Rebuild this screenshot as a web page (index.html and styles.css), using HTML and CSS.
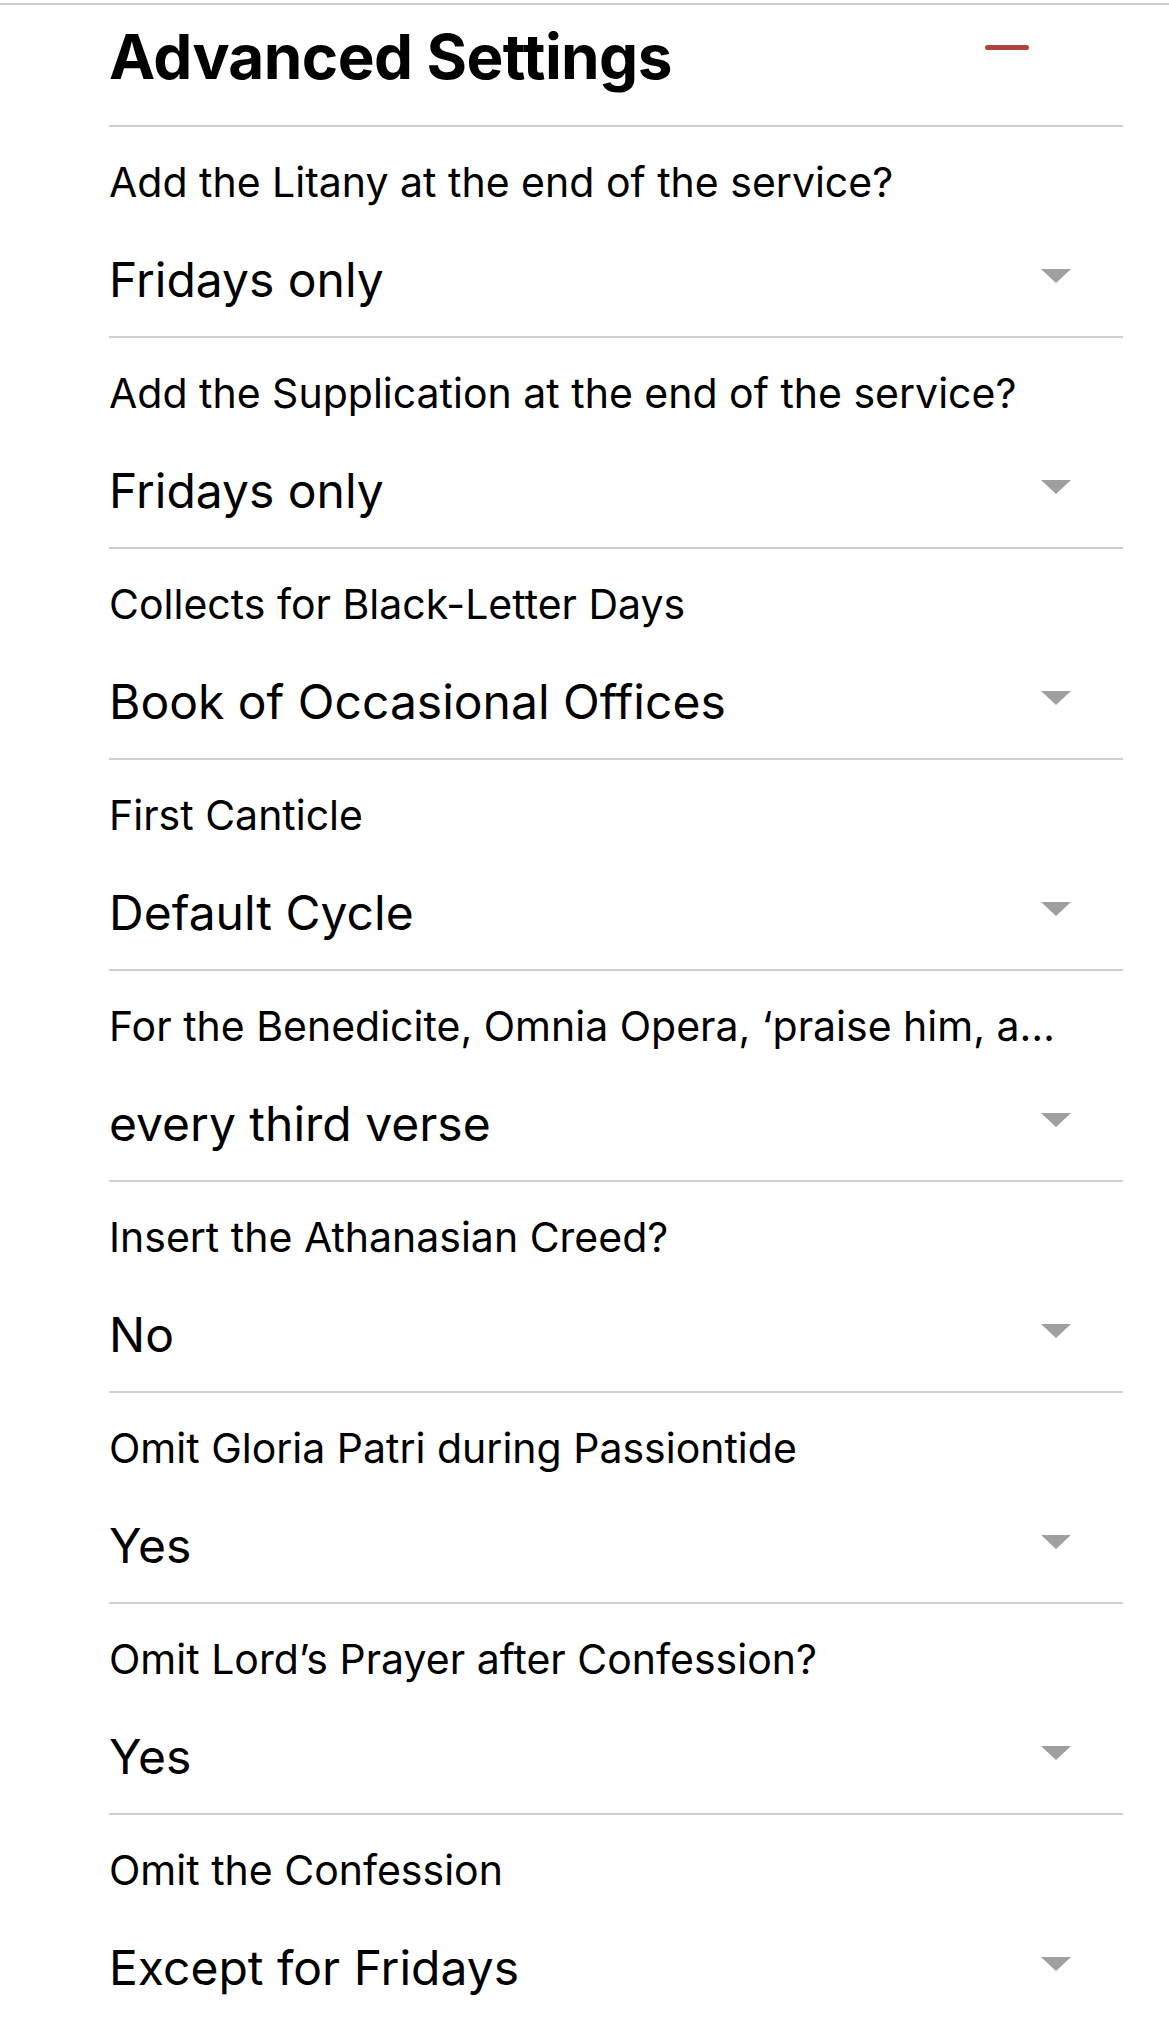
FILE: index.html
```html
<!DOCTYPE html>
<html>
<head>
<title>Advanced Settings</title>
<link rel="stylesheet" href="styles.css">
</head>
<body>

<div class="ajustes">
  <div class="ajustes__cabecera">
    <h1 class="ajustes__titulo">Advanced Settings</h1>
    <button class="ajustes__cerrar" aria-label="Collapse"></button>
  </div>

  <div class="opcion">
    <div class="opcion__pregunta">Add the Litany at the end of the service?</div>
    <div class="opcion__valor"><span>Fridays only</span><i class="flecha"></i></div>
  </div>
  <div class="opcion">
    <div class="opcion__pregunta">Add the Supplication at the end of the service?</div>
    <div class="opcion__valor"><span>Fridays only</span><i class="flecha"></i></div>
  </div>
  <div class="opcion">
    <div class="opcion__pregunta">Collects for Black-Letter Days</div>
    <div class="opcion__valor"><span>Book of Occasional Offices</span><i class="flecha"></i></div>
  </div>
  <div class="opcion">
    <div class="opcion__pregunta">First Canticle</div>
    <div class="opcion__valor"><span>Default Cycle</span><i class="flecha"></i></div>
  </div>
  <div class="opcion">
    <div class="opcion__pregunta">For the Benedicite, Omnia Opera, ‘praise him, a…</div>
    <div class="opcion__valor"><span>every third verse</span><i class="flecha"></i></div>
  </div>
  <div class="opcion">
    <div class="opcion__pregunta">Insert the Athanasian Creed?</div>
    <div class="opcion__valor"><span>No</span><i class="flecha"></i></div>
  </div>
  <div class="opcion">
    <div class="opcion__pregunta">Omit Gloria Patri during Passiontide</div>
    <div class="opcion__valor"><span>Yes</span><i class="flecha"></i></div>
  </div>
  <div class="opcion">
    <div class="opcion__pregunta">Omit Lord’s Prayer after Confession?</div>
    <div class="opcion__valor"><span>Yes</span><i class="flecha"></i></div>
  </div>
  <div class="opcion">
    <div class="opcion__pregunta">Omit the Confession</div>
    <div class="opcion__valor"><span>Except for Fridays</span><i class="flecha"></i></div>
  </div>
</div>

</body>
</html>
```

FILE: styles.css
```css
html {
  font-family: Inter, "Noto Sans", sans-serif;
}

body {
  margin: 0;
  background: #fff;
  color: #000;
  overflow: hidden;
}

.ajustes {
  border-top: 2px solid #d0d0d0;
  margin-top: 3px;
  padding: 0 46px 0 109px;
}

.ajustes__cabecera {
  display: flex;
  justify-content: space-between;
  align-items: flex-start;
  height: 120px;
  box-sizing: border-box;
}

.ajustes__titulo {
  margin: 21px 0 0 0;
  font-size: 62px;
  line-height: 1;
  font-weight: 700;
  letter-spacing: -0.6px;
}

.ajustes__cerrar {
  margin: 40px 94px 0 0;
  width: 44px;
  height: 5px;
  border: none;
  border-radius: 3px;
  background: #b0443a;
  padding: 0;
}

.opcion {
  border-top: 2px solid #d0d0d0;
  height: 211px;
  box-sizing: border-box;
  padding-top: 31px;
}

.opcion__pregunta {
  font-size: 41px;
  line-height: 1.2;
  white-space: nowrap;
  overflow: hidden;
  text-overflow: ellipsis;
  margin-right: 60px;
}

.opcion__valor {
  display: flex;
  justify-content: space-between;
  align-items: center;
  margin-top: 44px;
  font-size: 48px;
  line-height: 1.2;
}

.flecha {
  width: 0;
  height: 0;
  border-left: 15px solid transparent;
  border-right: 15px solid transparent;
  border-top: 14px solid #9f9f9f;
  margin: 0 52px 7px 0;
}
```
